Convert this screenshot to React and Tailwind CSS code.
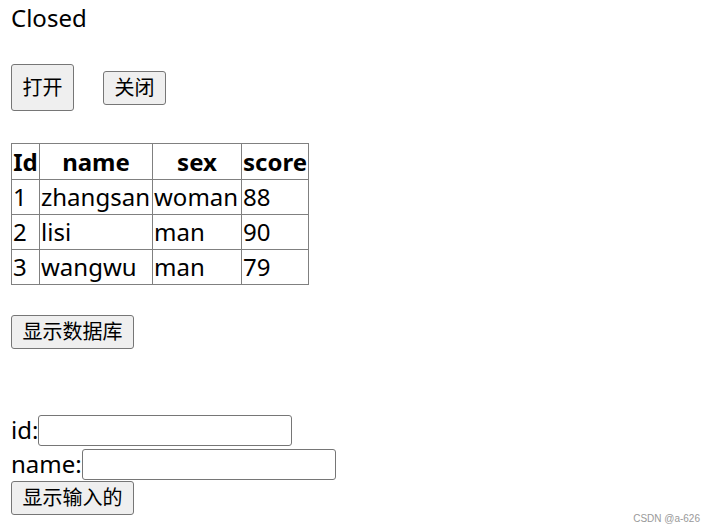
import React from 'react';

const font = { fontFamily: '"Noto Sans", "Noto Sans CJK SC", sans-serif' };

const Btn = ({ children, className = '' }) => (
  <button
    className={`bg-[#efefef] border border-[#767676] rounded-[3px] text-black text-[20px] leading-none flex items-center justify-center ${className}`}
  >
    {children}
  </button>
);

const rows = [
  ['1', 'zhangsan', 'woman', '88'],
  ['2', 'lisi', 'man', '90'],
  ['3', 'wangwu', 'man', '79'],
];

const App = () => {
  return (
    <div className="relative w-[715px] h-[532px] bg-white text-black text-[24px] overflow-hidden" style={font}>
      <div className="pl-[11px] pt-[3px] flex flex-col">
        <div className="h-[30px] leading-[30px]">Closed</div>

        <div className="flex items-center gap-[29px] mt-[31px] h-[47px]">
          <Btn className="w-[63px] h-[47px]">打开</Btn>
          <Btn className="w-[63px] h-[34px]">关闭</Btn>
        </div>

        <table className="mt-[32px] border-collapse w-[298px] border border-[#808080]">
          <thead>
            <tr className="h-[36px]">
              <th className="border border-[#808080] w-[28px] font-bold leading-none p-0">Id</th>
              <th className="border border-[#808080] w-[113px] font-bold leading-none p-0">name</th>
              <th className="border border-[#808080] w-[89px] font-bold leading-none p-0">sex</th>
              <th className="border border-[#808080] font-bold leading-none p-0">score</th>
            </tr>
          </thead>
          <tbody>
            {rows.map((r) => (
              <tr key={r[0]} className="h-[35px]">
                {r.map((c, i) => (
                  <td key={i} className="border border-[#808080] px-[1px] leading-none text-left whitespace-nowrap">
                    {c}
                  </td>
                ))}
              </tr>
            ))}
          </tbody>
        </table>

        <Btn className="mt-[30px] w-[123px] h-[34px]">显示数据库</Btn>

        <div className="mt-[65px] flex items-center h-[32px]">
          <span className="leading-none">id:</span>
          <input className="w-[254px] h-[31px] border border-[#767676] rounded-[3px]" />
        </div>
        <div className="mt-[2px] flex items-center h-[32px]">
          <span className="leading-none">name:</span>
          <input className="w-[254px] h-[31px] border border-[#767676] rounded-[3px]" />
        </div>
        <Btn className="mt-[1px] w-[123px] h-[34px]">显示输入的</Btn>
      </div>

      <div
        className="absolute right-[15px] bottom-[8px] text-[10px] text-[#999999] leading-none"
        style={{ fontFamily: '"Liberation Sans", sans-serif' }}
      >
        CSDN @a-626
      </div>
    </div>
  );
};

export default App;
